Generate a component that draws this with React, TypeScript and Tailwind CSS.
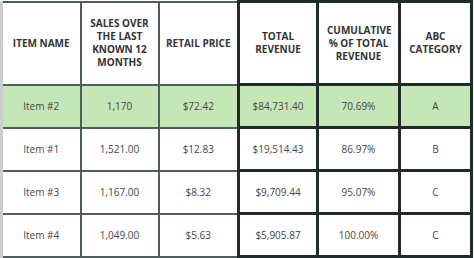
import React from "react";

const rows = [
  { name: "Item #2", sales: "1,170", price: "$72.42", revenue: "$84,731.40", cum: "70.69%", cat: "A", highlight: true },
  { name: "Item #1", sales: "1,521.00", price: "$12.83", revenue: "$19,514.43", cum: "86.97%", cat: "B" },
  { name: "Item #3", sales: "1,167.00", price: "$8.32", revenue: "$9,709.44", cum: "95.07%", cat: "C" },
  { name: "Item #4", sales: "1,049.00", price: "$5.63", revenue: "$5,905.87", cum: "100.00%", cat: "C" },
];

const thin = "border-[2px] border-[#4f5d5b]";
const thick = "border-[3px] border-[#1f2b2a]";

export default function App() {
  return (
    <div className="w-[474px] h-[258px] bg-[#eef1f1] font-['Open_Sans',sans-serif] text-[10px]">
      <table className="border-collapse table-fixed w-[470px] text-center bg-white border-l-[3px] border-l-[#c9cfcf]">
        <colgroup>
          <col className="w-[79px]" />
          <col className="w-[78px]" />
          <col className="w-[80px]" />
          <col className="w-[79px]" />
          <col className="w-[82px]" />
          <col className="w-[72px]" />
        </colgroup>
        <thead>
          <tr className="h-[83px] font-bold text-[#333] leading-[13px]">
            <th className={`${thin} border-l-0 px-1`}>ITEM NAME</th>
            <th className={`${thin} px-2`}>SALES OVER THE LAST KNOWN 12 MONTHS</th>
            <th className={`${thin} px-1`}>RETAIL PRICE</th>
            <th className={`${thick} px-3`}>TOTAL REVENUE</th>
            <th className={`${thick} px-2`}>CUMULATIVE % OF TOTAL REVENUE</th>
            <th className={`${thick} px-1`}>ABC CATEGORY</th>
          </tr>
        </thead>
        <tbody>
          {rows.map((r) => (
            <tr key={r.name} className={`h-[43px] text-[#454545] ${r.highlight ? "bg-[#c5e6b6]" : ""}`}>
              <td className={`${thin} border-l-0`}>{r.name}</td>
              <td className={thin}>{r.sales}</td>
              <td className={thin}>{r.price}</td>
              <td className={thick}>{r.revenue}</td>
              <td className={thick}>{r.cum}</td>
              <td className={thick}>{r.cat}</td>
            </tr>
          ))}
        </tbody>
      </table>
    </div>
  );
}
